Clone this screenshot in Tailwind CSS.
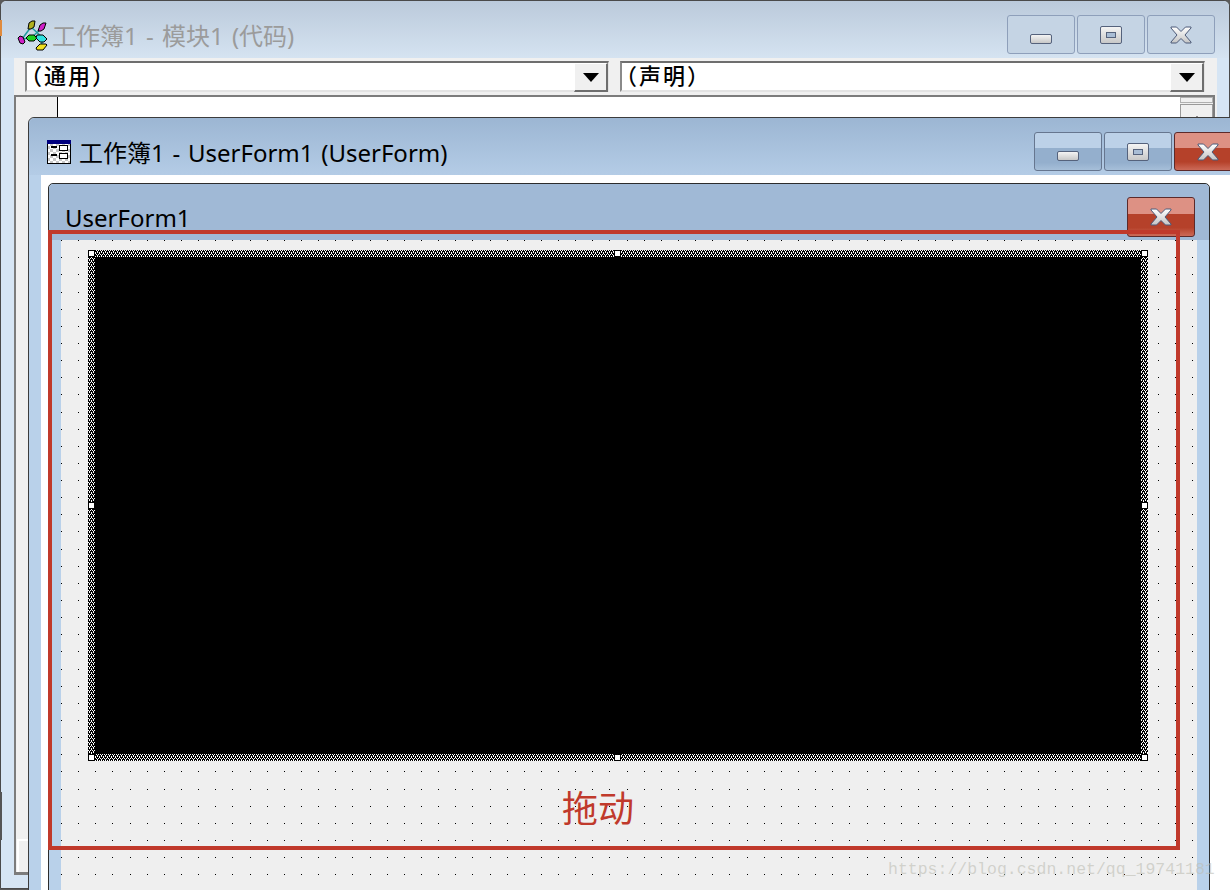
<!DOCTYPE html>
<html lang="zh">
<head>
<meta charset="UTF-8">
<title>UserForm1</title>
<script src="https://cdn.jsdelivr.net/npm/@tailwindcss/browser@4"></script>
</head>
<body class="relative w-[1230px] h-[890px] overflow-hidden bg-[#5a5a5a] font-['Noto_Sans','Noto_Sans_CJK_SC',sans-serif]">

<svg class="absolute w-0 h-0">
  <defs>
    <linearGradient id="xfill" x1="0" y1="0" x2="0" y2="1"><stop offset="0" stop-color="#ffffff"/><stop offset="1" stop-color="#c4c4c4"/></linearGradient>
    <pattern id="hatch" width="4" height="4" patternUnits="userSpaceOnUse"><rect width="4" height="4" fill="#000"/><path d="M0 0h1v1h-1zM2 0h1v1h-1zM1 1h1v1h-1zM1 2h1v1h-1zM3 2h1v1h-1zM3 3h1v1h-1z" fill="#fff"/></pattern>
    <pattern id="check" width="6" height="6" patternUnits="userSpaceOnUse"><rect width="6" height="6" fill="#fff"/><rect width="3" height="3" fill="#c8c8c8"/><rect x="3" y="3" width="3" height="3" fill="#c8c8c8"/></pattern>
    <symbol id="xicon" viewBox="0 0 22 18"><path d="M1 1h5.500l4.500 4.500 4.500-4.500h5.500v1l-6 7 6 7v1h-5.500l-4.500-4.500-4.500 4.500h-5.500v-1l6-7-6-7z" fill="url(#xfill)" stroke="#4d5a78" stroke-width="1"/></symbol>
  </defs>
</svg>

<!-- jendela belakang: modul kode -->
<div class="absolute left-0 top-0 w-[1230px] h-[889px] flex flex-col border border-[#4a4a4a] rounded-t-[6px] bg-[#d6e5f4]">
  <div class="h-[57px] shrink-0 flex items-start rounded-t-[6px] bg-gradient-to-b from-[#bbcadb] to-[#d5e3f1]">
    <svg class="ml-[16px] mt-[19px] shrink-0" width="32" height="32" viewBox="0 0 32 32">
      <path d="M14 7L5 19M14 7l12 11M25 8L14 18M5 19l9-1h12l-2 9" fill="none" stroke="#1f9c9c" stroke-width="1.500"/>
      <path d="M12 3l3-2h3l-1 6-3 2h-3z" fill="#b0b020" stroke="#000"/>
      <path d="M23 5l3-2h3l-2 6-3 2h-3z" fill="#d020c8" stroke="#000"/>
      <path d="M1 18l2-2 3 1 2 5-2 2-3-1z" fill="#d020c8" stroke="#000"/>
      <path d="M9 18l3-3h5l3 3-3 3h-5z" fill="#20d020" stroke="#000"/>
      <path d="M20 15h6l4 4-3 3h-4l-4-4z" fill="#30e0e0" stroke="#000"/>
      <path d="M19 28l4-4h6l1 1-4 5h-6z" fill="#f0e020" stroke="#000"/>
    </svg>
    <span class="ml-[3px] mt-[17px] text-[24px] leading-[36px] [word-spacing:2px] text-[#9b9b9b] whitespace-nowrap">工作簿1 - 模块1 (代码)</span>
    <div class="ml-auto mr-[14px] mt-[14px] flex gap-[2px]">
      <div class="w-[68px] h-[39px] flex items-end justify-center pb-[9px] rounded-[3px] border border-[#8e9fba] bg-[#c5d4e4]">
        <div class="w-[22px] h-[10px] rounded-[2px] border border-[#55627c] bg-gradient-to-b from-[#f4f4f4] to-[#c8c8c8]"></div>
      </div>
      <div class="w-[68px] h-[39px] flex items-center justify-center rounded-[3px] border border-[#8e9fba] bg-[#c5d4e4]">
        <div class="w-[22px] h-[18px] flex items-center justify-center rounded-[2px] border border-[#55627c] bg-gradient-to-b from-[#f4f4f4] to-[#c8c8c8]">
          <div class="w-[10px] h-[6px] border border-[#55627c] bg-[#a9bdd5]"></div>
        </div>
      </div>
      <div class="w-[68px] h-[39px] flex items-center justify-center rounded-[3px] border border-[#8e9fba] bg-[#c5d4e4]">
        <svg width="22" height="18"><use href="#xicon"/></svg>
      </div>
    </div>
  </div>

  <div class="flex-1 flex flex-col ml-[13px] mr-[12px] mb-[13px] bg-[#f0f0f0]">
    <div class="h-[37px] shrink-0 flex pt-[3px] pl-[11px] gap-[11px]">
      <div class="w-[584px] h-[31px] flex border-t-2 border-l-2 border-b-2 border-r border-t-[#6e6e6e] border-l-[#8a8a8a] border-b-[#e3e3e3] border-r-[#e3e3e3] bg-white">
        <span class="flex-1 -ml-[7px] -mt-[2px] text-[22px] font-medium tracking-[2px] leading-[28px] text-black whitespace-nowrap">（通用）</span>
        <div class="w-[34px] h-[29px] flex items-center justify-center border-r-2 border-b-2 border-[#6e6e6e] border-t border-l border-t-white border-l-white bg-[#f0f0f0]">
          <div class="w-0 h-0 border-x-[8px] border-t-[9px] border-x-transparent border-t-black"></div>
        </div>
      </div>
      <div class="w-[585px] h-[31px] flex border-t-2 border-l-2 border-b-2 border-r border-t-[#6e6e6e] border-l-[#8a8a8a] border-b-[#e3e3e3] border-r-[#e3e3e3] bg-white">
        <span class="flex-1 -ml-[7px] -mt-[2px] text-[22px] font-medium tracking-[2px] leading-[28px] text-black whitespace-nowrap">（声明）</span>
        <div class="w-[34px] h-[29px] flex items-center justify-center border-r-2 border-b-2 border-[#6e6e6e] border-t border-l border-t-white border-l-white bg-[#f0f0f0]">
          <div class="w-0 h-0 border-x-[8px] border-t-[9px] border-x-transparent border-t-black"></div>
        </div>
      </div>
    </div>
    <div class="flex-1 flex mr-[2px] border-2 border-[#7c7c7c] border-b-[3px]">
      <div class="w-[42px] shrink-0 flex flex-col justify-end bg-[#f0f0f0] border-r border-black">
        <div class="w-[12px] h-[33px] ml-px border-t-2 border-l-2 border-white"></div>
      </div>
      <div class="flex-1 bg-white"></div>
      <div class="w-[33px] shrink-0 flex flex-col bg-[#f0f0f0]">
        <div class="h-[6px] border border-[#b0b0b0] bg-[#f0f0f0]"></div>
        <div class="h-[40px] mt-px border border-[#9a9a9a] bg-[#f0f0f0] flex justify-center pt-[11px]">
          <div class="w-0 h-0 border-x-[4px] border-b-[5px] border-x-transparent border-b-black"></div>
        </div>
      </div>
    </div>
  </div>
</div>
<div class="absolute left-0 top-[20px] w-[2px] h-[16px] bg-[#e08a3c]"></div>
<div class="absolute left-0 top-[792px] w-[2px] h-[48px] bg-[#555]"></div>

<!-- jendela depan: UserForm -->
<div class="absolute left-[28px] top-[117px] w-[1220px] h-[790px] flex flex-col border border-[#3c3c3c] rounded-tl-[6px] bg-[#b9d1ea]">
  <div class="h-[57px] shrink-0 flex items-start rounded-tl-[6px] bg-gradient-to-b from-[#9cb6d3] to-[#b4cce6]">
    <svg class="ml-[18px] mt-[22px] shrink-0" width="24" height="24" viewBox="0 0 24 24" shape-rendering="crispEdges">
      <rect width="24" height="24" fill="#000"/>
      <rect y="0" width="24" height="4" fill="#00007f"/>
      <rect x="1" y="4" width="22" height="19" fill="url(#check)"/>
      <rect x="4" y="6" width="6" height="2" fill="#000"/><rect x="4" y="14" width="6" height="2" fill="#000"/>
      <rect x="12.500" y="5.500" width="8" height="5" fill="#fff" stroke="#000"/><rect x="12.500" y="13.500" width="8" height="5" fill="#fff" stroke="#000"/>
    </svg>
    <span class="ml-[8px] mt-[17px] text-[24px] leading-[36px] [word-spacing:1.500px] text-black whitespace-nowrap">工作簿1 - UserForm1 (UserForm)</span>
    <div class="absolute left-[1005px] top-[14px] flex gap-[2px]">
      <div class="w-[68px] h-[39px] flex items-end justify-center pb-[9px] rounded-[3px] border border-[#66768f] bg-[linear-gradient(#bcd1e8_40%,#94afcd_40%,#94afcd_80%,#a6bfd9)]">
        <div class="w-[22px] h-[10px] rounded-[2px] border border-[#55627c] bg-gradient-to-b from-[#f4f4f4] to-[#c8c8c8]"></div>
      </div>
      <div class="w-[68px] h-[39px] flex items-center justify-center rounded-[3px] border border-[#66768f] bg-[linear-gradient(#bcd1e8_40%,#94afcd_40%,#94afcd_80%,#a6bfd9)]">
        <div class="w-[22px] h-[18px] flex items-center justify-center rounded-[2px] border border-[#55627c] bg-gradient-to-b from-[#f4f4f4] to-[#c8c8c8]">
          <div class="w-[10px] h-[6px] border border-[#55627c] bg-[#a9bdd5]"></div>
        </div>
      </div>
      <div class="w-[68px] h-[39px] flex items-center justify-center rounded-[3px] border border-[#5c2a2a] bg-[linear-gradient(#dd9184_40%,#b5412a_40%,#b5412a_78%,#cc6a58)]">
        <svg width="22" height="18"><use href="#xicon"/></svg>
      </div>
    </div>
  </div>

  <div class="flex-1 ml-[12px] pl-[7px] pt-[8px] bg-white">
    <div class="relative w-[1162px] h-[720px] flex flex-col border border-[#2c2c2c] rounded-t-[5px] bg-[#b9d1ea]">
      <div class="h-[56px] shrink-0 flex items-start rounded-t-[5px] bg-[#a0b9d6]">
        <span class="ml-[16px] mt-[16px] text-[24px] leading-[36px] text-black whitespace-nowrap">UserForm1</span>
        <div class="absolute left-[1078px] top-[13px] w-[68px] h-[40px] flex items-center justify-center rounded-[3px] border border-[#5c2a2a] bg-[linear-gradient(#dd9184_42%,#b5412a_42%,#b5412a_78%,#cc6a58)]">
          <svg width="22" height="18"><use href="#xicon"/></svg>
        </div>
      </div>
      <div class="relative flex-1 ml-[12px] mr-[12px] bg-[#efefef]">
        <svg id="dots" class="absolute left-0 top-0" width="1136" height="680" shape-rendering="crispEdges"></svg>
        <div class="relative ml-[27px] mt-[10px] w-[1060px] h-[511px] p-[7px]">
          <svg class="absolute inset-0" width="1060" height="511" shape-rendering="crispEdges"><rect width="1060" height="511" fill="url(#hatch)"/></svg>
          <div class="relative w-full h-full bg-black"></div>
          <div class="absolute left-0 top-0 w-[7px] h-[7px] border border-black bg-white"></div>
          <div class="absolute left-[526px] top-0 w-[7px] h-[7px] border border-black bg-white"></div>
          <div class="absolute right-0 top-0 w-[7px] h-[7px] border border-black bg-white"></div>
          <div class="absolute left-0 top-[252px] w-[7px] h-[7px] border border-black bg-white"></div>
          <div class="absolute right-0 top-[252px] w-[7px] h-[7px] border border-black bg-white"></div>
          <div class="absolute left-0 bottom-0 w-[7px] h-[7px] border border-black bg-white"></div>
          <div class="absolute left-[526px] bottom-0 w-[7px] h-[7px] border border-black bg-white"></div>
          <div class="absolute right-0 bottom-0 w-[7px] h-[7px] border border-black bg-white"></div>
        </div>
      </div>
    </div>
  </div>
</div>

<!-- anotasi merah -->
<div class="absolute left-[48px] top-[230px] w-[1132px] h-[620px] flex items-end pl-[510px] pb-[12px] border-4 border-[#c0392b]">
  <span class="text-[36px] leading-[50px] text-[#c0392b] whitespace-nowrap">拖动</span>
</div>

<div class="absolute left-[888px] top-[858px] font-['Liberation_Mono',monospace] text-[16.500px] leading-[24px] text-[#bdbdb4]/60 whitespace-nowrap">https://blog.csdn.net/qq_19741181</div>

<script>
  // titik grid form desainer
  let d = "";
  for (let i = 0; i <= 66; i++) {
    for (let j = 0; j <= 38; j++) {
      const x = Math.round(i * 17.14);
      const y = Math.round(0.1 + j * 17.14);
      d += `M${x} ${y}h1v1h-1z`;
    }
  }
  document.getElementById("dots").innerHTML = `<path d="${d}" fill="#000"/>`;
</script>
</body>
</html>
